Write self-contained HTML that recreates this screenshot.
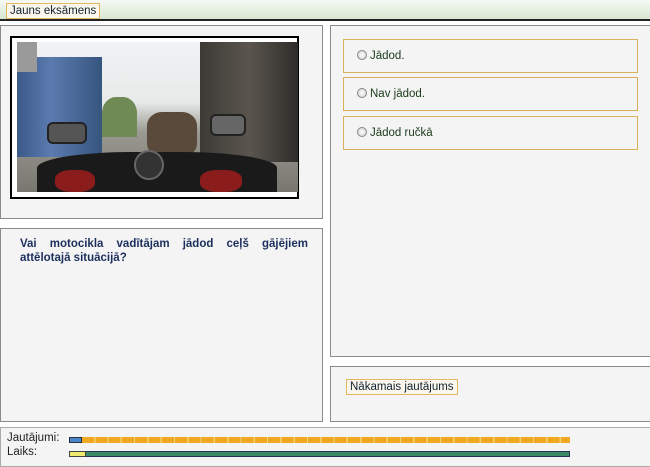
<!DOCTYPE html>
<html><head><meta charset="utf-8"><style>
*{margin:0;padding:0;box-sizing:border-box}
body{width:650px;height:465px;background:#fff;font-family:"Liberation Sans",sans-serif;font-size:11px;color:#1a3a1a;position:relative;overflow:hidden}
.abs{position:absolute}
.panel{position:absolute;background:#f4f4f4;border:1px solid #8a8a8a}
.hdr{left:0;top:0;width:650px;height:21px;background:linear-gradient(#f6faf4,#d7e6d2);border-bottom:2px solid #222}
.tag{position:absolute;border:1px solid #e2b860;background:#fbf7ec;padding:1px 3px;font-size:11.5px;color:#123}
.opt{position:absolute;left:343px;width:295px;height:34px;border:1px solid #d9b15a;background:#f4f4f4}
.opt span{position:absolute;left:13px;top:10px;font-size:11.5px}
.rad{display:inline-block;width:10px;height:10px;border-radius:50%;border:1px solid #888;background:radial-gradient(#fff,#ccc);vertical-align:-1px;margin-right:3px}
</style></head><body>
<div class="abs hdr"></div>
<div class="tag" style="left:6px;top:3px">Jauns eksāmens</div>

<div class="panel" style="left:0;top:25px;width:323px;height:194px"></div>
<div class="abs" style="left:10px;top:36px;width:289px;height:163px;border:2px solid #000;background:#fff"></div>
<div class="abs" style="left:17px;top:42px;width:281px;height:150px;overflow:hidden;background:linear-gradient(#f0f2f4 0%,#e8eaea 40%,#9a9a92 60%,#77766f 100%)">
 <div class="abs" style="left:0;top:15px;width:85px;height:100px;background:linear-gradient(90deg,#3b5a8a,#5b7bb0 40%,#36557e)"></div>
 <div class="abs" style="left:0;top:0;width:20px;height:30px;background:#9a9a9a"></div>
 <div class="abs" style="left:183px;top:0;width:98px;height:120px;background:linear-gradient(90deg,#3d3a36,#5a554e 50%,#2e2c29)"></div>
 <div class="abs" style="left:85px;top:55px;width:35px;height:40px;background:#6f8a55;border-radius:40% 40% 0 0"></div>
 <div class="abs" style="left:130px;top:70px;width:50px;height:45px;background:#5a4a3c;border-radius:30%"></div>
 <div class="abs" style="left:30px;top:80px;width:40px;height:22px;background:#555;border-radius:6px;border:2px solid #222"></div>
 <div class="abs" style="left:193px;top:72px;width:36px;height:22px;background:#666;border-radius:6px;border:2px solid #222"></div>
 <div class="abs" style="left:20px;top:110px;width:240px;height:40px;background:#1a1a1a;border-radius:40% 40% 0 0"></div>
 <div class="abs" style="left:38px;top:128px;width:40px;height:22px;background:#8a1c1c;border-radius:40%"></div>
 <div class="abs" style="left:183px;top:128px;width:42px;height:22px;background:#8a1c1c;border-radius:40%"></div>
 <div class="abs" style="left:117px;top:108px;width:30px;height:30px;background:#333;border-radius:50%;border:2px solid #666"></div>
</div>

<div class="panel" style="left:0;top:228px;width:323px;height:194px"></div>
<div class="abs" style="left:20px;top:237px;width:288px;font-weight:bold;color:#1c2f5c;font-size:11.5px;line-height:14px;text-align:justify;text-align-last:left">Vai motocikla vadītājam jādod ceļš gājējiem attēlotajā situācijā?</div>

<div class="panel" style="left:330px;top:25px;width:322px;height:332px"></div>
<div class="opt" style="top:39px"><span><i class="rad"></i>Jādod.</span></div>
<div class="opt" style="top:77px"><span><i class="rad"></i>Nav jādod.</span></div>
<div class="opt" style="top:116px"><span><i class="rad"></i>Jādod ručkā</span></div>

<div class="panel" style="left:330px;top:366px;width:322px;height:56px"></div>
<div class="tag" style="left:346px;top:379px">Nākamais jautājums</div>

<div class="panel" style="left:0;top:427px;width:652px;height:40px;border-color:#aaa"></div>
<div class="abs" style="left:7px;top:432px;font-size:11.5px;color:#222">Jautājumi:</div>
<div class="abs" style="left:7px;top:446px;font-size:11.5px;color:#222">Laiks:</div>
<div class="abs" style="left:69px;top:437px;width:13px;height:6px;background:#4a86c8;border:1px solid #234"></div>
<div class="abs" style="left:82px;top:437px;width:488px;height:6px;background:repeating-linear-gradient(90deg,#f0a820 0,#f0a820 12px,#f8d070 12px,#f8d070 13.3px)"></div>
<div class="abs" style="left:69px;top:451px;width:501px;height:6px;background:#3a8a66;border:1px solid #235"></div>
<div class="abs" style="left:69px;top:451px;width:17px;height:6px;background:#f0ea70;border:1px solid #444"></div>
</body></html>
